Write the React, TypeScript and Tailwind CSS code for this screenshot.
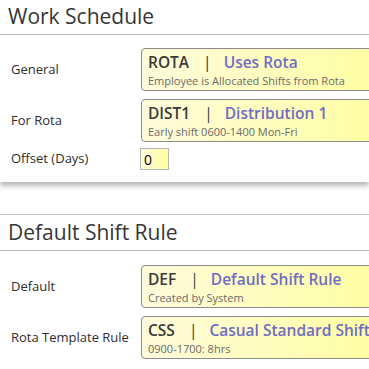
import React from 'react';

interface LookupProps {
  code: string;
  name: string;
  detail: string;
}

function LookupBox({ code, name, detail }: LookupProps) {
  return (
    <div className="h-[43px] w-[260px] shrink-0 rounded-[4px] border border-[#8c8c8c] bg-linear-to-r from-[#fffbdb] to-[#ffff9c] pl-[6px] pt-[2px]">
      <div className="flex items-baseline whitespace-nowrap text-[15.5px] font-semibold leading-[22px]">
        <span className="text-[#3a3a3a]">{code}</span>
        <span className="ml-[14px] mr-[12px] font-normal text-[#3a3a3a]">|</span>
        <span className="text-[#6f6cc4]">{name}</span>
      </div>
      <div className="whitespace-nowrap text-[11px] leading-[15px] text-[#6a6a6a]">{detail}</div>
    </div>
  );
}

function Row({ label, children }: { label: string; children: React.ReactNode }) {
  return (
    <div className="flex items-center">
      <div className="w-[141px] shrink-0 pl-[11px] text-[13px] text-[#2e2e2e]">{label}</div>
      {children}
    </div>
  );
}

function Header({ title }: { title: string }) {
  return (
    <div className="flex h-[36px] items-center border-b border-[#bdbdbd] pl-[8px] text-[21px] text-[#363636]">
      {title}
    </div>
  );
}

export default function App() {
  return (
    <div className="h-[369px] w-[369px] overflow-hidden bg-white font-['Open_Sans',sans-serif]">
      <section className="-mt-px bg-white pb-[12px] shadow-[0_4px_5px_rgba(0,0,0,0.28)]">
        <Header title="Work Schedule" />
        <div className="flex flex-col pt-[13px]">
          <Row label="General">
            <LookupBox code="ROTA" name="Uses Rota" detail="Employee is Allocated Shifts from Rota" />
          </Row>
          <div className="mt-[8px]">
            <Row label="For Rota">
              <LookupBox code="DIST1" name="Distribution 1" detail="Early shift 0600-1400 Mon-Fri" />
            </Row>
          </div>
          <div className="mt-[6px]">
            <Row label="Offset (Days)">
              <input
                defaultValue="0"
                className="-ml-px h-[22px] w-[29px] border border-[#b5b5b5] bg-linear-to-r from-[#fffbdb] to-[#ffff9c] px-[3px] text-[14px] text-black outline-none"
              />
            </Row>
          </div>
        </div>
      </section>
      <section className="mt-[32px] border-t border-[#c4c4c4] bg-white">
        <Header title="Default Shift Rule" />
        <div className="flex flex-col gap-[8px] pt-[14px]">
          <Row label="Default">
            <LookupBox code="DEF" name="Default Shift Rule" detail="Created by System" />
          </Row>
          <Row label="Rota Template Rule">
            <LookupBox code="CSS" name="Casual Standard Shift" detail="0900-1700: 8hrs" />
          </Row>
        </div>
      </section>
    </div>
  );
}
